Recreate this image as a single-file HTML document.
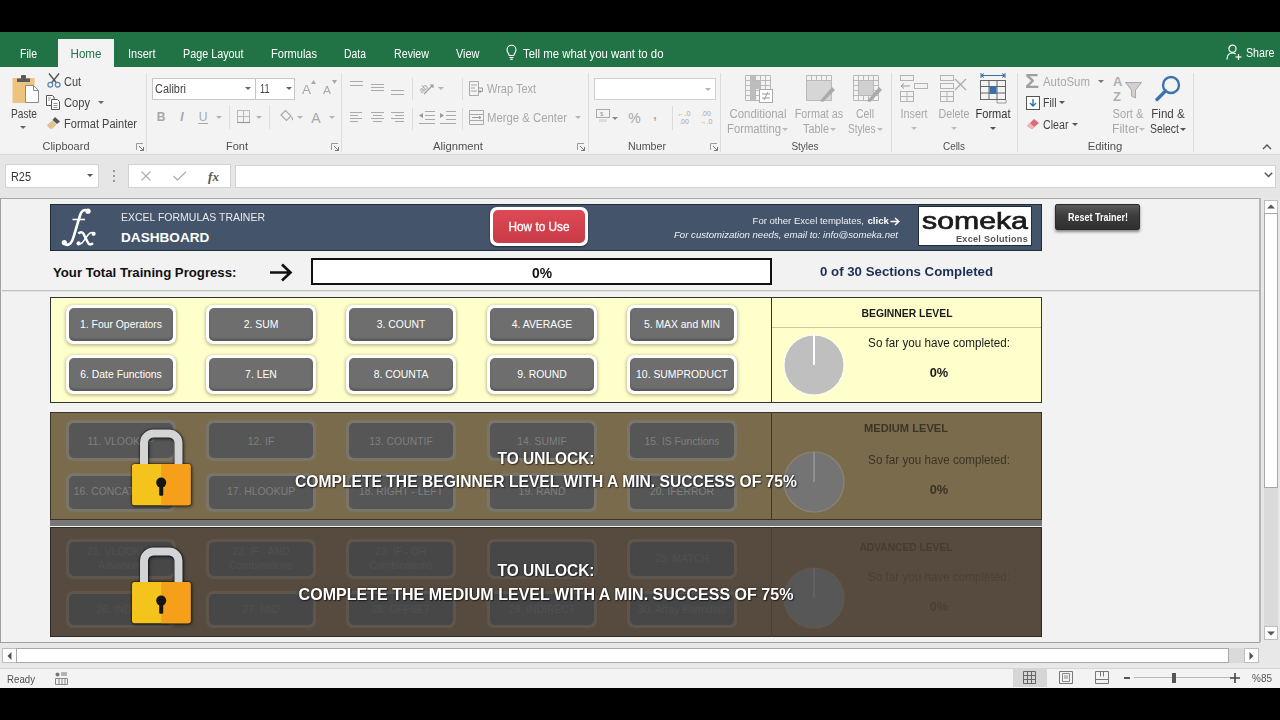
<!DOCTYPE html>
<html><head><meta charset="utf-8">
<style>
*{margin:0;padding:0;box-sizing:border-box}
html,body{width:1280px;height:720px;overflow:hidden;background:#000;position:relative}
.a{position:absolute}
.t{position:absolute;white-space:pre}
svg{position:absolute;overflow:visible}
</style></head><body>
<div class="a" style="left:0px;top:0px;width:1280px;height:32px;background:#000;"></div>
<div class="a" style="left:0px;top:32px;width:1280px;height:35px;background:#217346;"></div>
<div class="a" style="left:58px;top:39px;width:56px;height:28px;background:#f3f3f3;"></div>
<div class="t" style="left:20px;top:47.6px;font:normal normal 12px/1 'Liberation Sans',sans-serif;color:#ffffff;transform:scaleX(0.879);transform-origin:left;">File</div>
<div class="t" style="left:-214px;width:600px;text-align:center;top:47.6px;font:normal normal 12px/1 'Liberation Sans',sans-serif;color:#217346;transform:scaleX(0.968);transform-origin:center;">Home</div>
<div class="t" style="left:128px;top:47.6px;font:normal normal 12px/1 'Liberation Sans',sans-serif;color:#ffffff;transform:scaleX(0.916);transform-origin:left;">Insert</div>
<div class="t" style="left:183px;top:47.6px;font:normal normal 12px/1 'Liberation Sans',sans-serif;color:#ffffff;transform:scaleX(0.898);transform-origin:left;">Page Layout</div>
<div class="t" style="left:271px;top:47.6px;font:normal normal 12px/1 'Liberation Sans',sans-serif;color:#ffffff;transform:scaleX(0.920);transform-origin:left;">Formulas</div>
<div class="t" style="left:344px;top:47.6px;font:normal normal 12px/1 'Liberation Sans',sans-serif;color:#ffffff;transform:scaleX(0.868);transform-origin:left;">Data</div>
<div class="t" style="left:394px;top:47.6px;font:normal normal 12px/1 'Liberation Sans',sans-serif;color:#ffffff;transform:scaleX(0.889);transform-origin:left;">Review</div>
<div class="t" style="left:456px;top:47.6px;font:normal normal 12px/1 'Liberation Sans',sans-serif;color:#ffffff;transform:scaleX(0.911);transform-origin:left;">View</div>
<svg style="left:506px;top:45px" width="11" height="15" viewBox="0 0 11 15"><path d="M3.2 10.5 C3.2 8.5 1 7.5 1 4.8 A4.5 4.5 0 0 1 10 4.8 C10 7.5 7.8 8.5 7.8 10.5 Z" fill="none" stroke="#fff" stroke-width="1.1"/><line x1="3.5" y1="12.5" x2="7.5" y2="12.5" stroke="#fff" stroke-width="1.1"/><line x1="4.2" y1="14.3" x2="6.8" y2="14.3" stroke="#fff" stroke-width="1.1"/></svg>
<div class="t" style="left:523px;top:47.6px;font:normal normal 12px/1 'Liberation Sans',sans-serif;color:#ffffff;transform:scaleX(0.949);transform-origin:left;">Tell me what you want to do</div>
<svg style="left:1226px;top:44px" width="16" height="16" viewBox="0 0 16 16"><circle cx="6.5" cy="4.8" r="3.6" fill="none" stroke="#fff" stroke-width="1.2"/><path d="M1 15.5 C1 11 3.5 9 6.5 9 C8 9 9 9.5 9.8 10" fill="none" stroke="#fff" stroke-width="1.2"/><line x1="12.5" y1="10" x2="12.5" y2="16" stroke="#fff" stroke-width="1.2"/><line x1="9.5" y1="13" x2="15.5" y2="13" stroke="#fff" stroke-width="1.2"/></svg>
<div class="t" style="left:1246px;top:47.1px;font:normal normal 12px/1 'Liberation Sans',sans-serif;color:#ffffff;transform:scaleX(0.890);transform-origin:left;">Share</div>
<div class="a" style="left:0px;top:67px;width:1280px;height:88px;background:#f3f3f3;"></div>
<div class="a" style="left:0px;top:154px;width:1280px;height:1px;background:#d8d8d8;"></div>
<div class="a" style="left:146px;top:73px;width:1px;height:79px;background:#dcdcdc;"></div>
<div class="a" style="left:341px;top:73px;width:1px;height:79px;background:#dcdcdc;"></div>
<div class="a" style="left:588px;top:73px;width:1px;height:79px;background:#dcdcdc;"></div>
<div class="a" style="left:720px;top:73px;width:1px;height:79px;background:#dcdcdc;"></div>
<div class="a" style="left:891px;top:73px;width:1px;height:79px;background:#dcdcdc;"></div>
<div class="a" style="left:1017px;top:73px;width:1px;height:79px;background:#dcdcdc;"></div>
<div class="a" style="left:1193px;top:73px;width:1px;height:79px;background:#dcdcdc;"></div>
<svg style="left:12px;top:75px" width="28" height="30" viewBox="0 0 28 30"><rect x="0.5" y="3" width="22" height="25" fill="#ecc47e"/><path d="M5 3.5H18V7H5Z" fill="#5a5a5a"/><rect x="9" y="0" width="5" height="4" rx="1" fill="#5a5a5a"/><path d="M13.5 10.5H21.5L26.5 15.5V27.5H13.5Z" fill="#fff" stroke="#8a8a8a" stroke-width="1"/><path d="M21.5 10.5V15.5H26.5" fill="none" stroke="#8a8a8a" stroke-width="1"/></svg>
<div class="t" style="left:-276px;width:600px;text-align:center;top:107.6px;font:normal normal 12px/1 'Liberation Sans',sans-serif;color:#444444;transform:scaleX(0.847);transform-origin:center;">Paste</div>
<svg style="left:20px;top:125.5px" width="6" height="3" viewBox="0 0 6 3"><path d="M0 0H6L3 3Z" fill="#666"/></svg>
<svg style="left:47px;top:73px" width="14" height="15" viewBox="0 0 14 15"><path d="M2 0.5L9.5 10M12 0.5L4.5 10" stroke="#555" stroke-width="1.4" fill="none"/><circle cx="3.3" cy="11.8" r="2.4" fill="none" stroke="#5b86b0" stroke-width="1.2"/><circle cx="10.7" cy="11.8" r="2.4" fill="none" stroke="#5b86b0" stroke-width="1.2"/></svg>
<div class="t" style="left:64px;top:75.6px;font:normal normal 12px/1 'Liberation Sans',sans-serif;color:#444444;transform:scaleX(0.910);transform-origin:left;">Cut</div>
<svg style="left:46px;top:95px" width="15" height="15" viewBox="0 0 15 15"><path d="M0.5 0.5H6.5L8 2V10.5H0.5Z" fill="#fff" stroke="#555" stroke-width="1"/><path d="M5.5 4.5H11.5L13.5 6.5V14.5H5.5Z" fill="#fff" stroke="#555" stroke-width="1"/><path d="M7.5 8.5H11.5M7.5 10.5H11.5M7.5 12.5H11.5M2 3H5M2 5H4" stroke="#777" stroke-width="0.8"/></svg>
<div class="t" style="left:64px;top:97.1px;font:normal normal 12px/1 'Liberation Sans',sans-serif;color:#444444;transform:scaleX(0.928);transform-origin:left;">Copy</div>
<svg style="left:98px;top:100.5px" width="6" height="3" viewBox="0 0 6 3"><path d="M0 0H6L3 3Z" fill="#666"/></svg>
<svg style="left:46px;top:116px" width="16" height="14" viewBox="0 0 16 14"><path d="M9 1L14 5.5L11 8L6.5 4Z" fill="#555"/><path d="M6.5 4.5L10.5 8.5L6 13C4 13 1.5 11 1 9Z" fill="#e6c38e"/></svg>
<div class="t" style="left:64px;top:118.1px;font:normal normal 12px/1 'Liberation Sans',sans-serif;color:#444444;transform:scaleX(0.920);transform-origin:left;">Format Painter</div>
<div class="t" style="left:-234px;width:600px;text-align:center;top:140.9px;font:normal normal 11.5px/1 'Liberation Sans',sans-serif;color:#505050;transform:scaleX(0.955);transform-origin:center;">Clipboard</div>
<svg style="left:136px;top:143px" width="8" height="8" viewBox="0 0 8 8"><path d="M0.5 7V0.5H7" fill="none" stroke="#9a9a9a" stroke-width="1"/><path d="M3 3L7.5 7.5M7.5 4V7.5H4" fill="none" stroke="#777" stroke-width="1"/></svg>
<div class="a" style="left:152px;top:78px;width:143px;height:22px;background:#fff;border:1px solid #c6c6c6"></div>
<div class="a" style="left:255px;top:79px;width:1px;height:20px;background:#c6c6c6;"></div>
<div class="t" style="left:155px;top:83.1px;font:normal normal 12px/1 'Liberation Sans',sans-serif;color:#444444;transform:scaleX(0.911);transform-origin:left;">Calibri</div>
<svg style="left:245px;top:86.5px" width="6" height="3" viewBox="0 0 6 3"><path d="M0 0H6L3 3Z" fill="#666"/></svg>
<div class="t" style="left:259.5px;top:83.1px;font:normal normal 12px/1 'Liberation Sans',sans-serif;color:#444444;transform:scaleX(0.762);transform-origin:left;">11</div>
<svg style="left:286px;top:86.5px" width="6" height="3" viewBox="0 0 6 3"><path d="M0 0H6L3 3Z" fill="#666"/></svg>
<div class="t" style="left:302px;top:82.7px;font:normal normal 13px/1 'Liberation Sans',sans-serif;color:#a8a8a8;transform:scaleX(1.038);transform-origin:left;">A</div>
<svg style="left:311px;top:80px" width="5" height="4" viewBox="0 0 5 4"><path d="M0 4L2.5 0L5 4Z" fill="#a8a8a8"/></svg>
<div class="t" style="left:323px;top:84.6px;font:normal normal 11px/1 'Liberation Sans',sans-serif;color:#a8a8a8;transform:scaleX(1.089);transform-origin:left;">A</div>
<svg style="left:332px;top:80px" width="5" height="4" viewBox="0 0 5 4"><path d="M0 0L2.5 4L5 0Z" fill="#a8a8a8"/></svg>
<div class="t" style="left:-139px;width:600px;text-align:center;top:111.1px;font:normal bold 12px/1 'Liberation Sans',sans-serif;color:#a8a8a8;">B</div>
<div class="t" style="left:-118px;width:600px;text-align:center;top:111.1px;font:italic bold 12px/1 'Liberation Sans',sans-serif;color:#a8a8a8;">I</div>
<div class="t" style="left:-97px;width:600px;text-align:center;top:110.6px;font:normal normal 12px/1 'Liberation Sans',sans-serif;color:#a8a8a8;">U</div>
<div class="a" style="left:198px;top:123px;width:10px;height:1px;background:#a8a8a8;"></div>
<svg style="left:216px;top:115.5px" width="6" height="3" viewBox="0 0 6 3"><path d="M0 0H6L3 3Z" fill="#b5b5b5"/></svg>
<div class="a" style="left:229px;top:105px;width:1px;height:24px;background:#dcdcdc;"></div>
<svg style="left:237px;top:110px" width="13" height="13" viewBox="0 0 13 13"><path d="M0.5 0.5H12.5V12.5H0.5ZM6.5 0.5V12.5M0.5 6.5H12.5" fill="none" stroke="#b8b8b8" stroke-width="1"/><path d="M0 12.5H13" stroke="#999" stroke-width="1.2"/></svg>
<svg style="left:256px;top:115.5px" width="6" height="3" viewBox="0 0 6 3"><path d="M0 0H6L3 3Z" fill="#b5b5b5"/></svg>
<div class="a" style="left:269px;top:105px;width:1px;height:24px;background:#dcdcdc;"></div>
<svg style="left:278px;top:109px" width="16" height="14" viewBox="0 0 16 14"><path d="M3 6L7.5 1.5L13 7L8.5 11.5Z" fill="none" stroke="#a8a8a8" stroke-width="1.2"/><path d="M13.5 8C14.5 9.5 15 10.5 14 11" stroke="#a8a8a8" stroke-width="1.2" fill="none"/></svg>
<svg style="left:297px;top:115.5px" width="6" height="3" viewBox="0 0 6 3"><path d="M0 0H6L3 3Z" fill="#b5b5b5"/></svg>
<div class="t" style="left:16px;width:600px;text-align:center;top:110.7px;font:normal normal 14px/1 'Liberation Sans',sans-serif;color:#a8a8a8;">A</div>
<svg style="left:329px;top:115.5px" width="6" height="3" viewBox="0 0 6 3"><path d="M0 0H6L3 3Z" fill="#b5b5b5"/></svg>
<div class="t" style="left:-63px;width:600px;text-align:center;top:140.9px;font:normal normal 11.5px/1 'Liberation Sans',sans-serif;color:#505050;transform:scaleX(0.956);transform-origin:center;">Font</div>
<svg style="left:331px;top:143px" width="8" height="8" viewBox="0 0 8 8"><path d="M0.5 7V0.5H7" fill="none" stroke="#9a9a9a" stroke-width="1"/><path d="M3 3L7.5 7.5M7.5 4V7.5H4" fill="none" stroke="#777" stroke-width="1"/></svg>
<svg style="left:350px;top:81px" width="16" height="9"><rect x="0" y="0" width="13" height="1" fill="#aaa"/><rect x="0" y="4" width="13" height="1" fill="#aaa"/></svg>
<svg style="left:371px;top:84px" width="16" height="10"><rect x="0" y="0" width="13" height="1" fill="#aaa"/><rect x="0" y="3" width="13" height="1" fill="#aaa"/><rect x="0" y="6" width="13" height="1" fill="#aaa"/></svg>
<svg style="left:391px;top:90px" width="16" height="9"><rect x="0" y="0" width="13" height="1" fill="#aaa"/><rect x="0" y="4" width="13" height="1" fill="#aaa"/></svg>
<svg style="left:350px;top:112px" width="16" height="13"><rect x="0" y="0" width="12" height="1" fill="#aaa"/><rect x="0" y="3" width="8" height="1" fill="#aaa"/><rect x="0" y="6" width="12" height="1" fill="#aaa"/><rect x="0" y="9" width="8" height="1" fill="#aaa"/></svg>
<svg style="left:371px;top:112px" width="16" height="13"><rect x="0" y="0" width="13" height="1" fill="#aaa"/><rect x="2" y="3" width="9" height="1" fill="#aaa"/><rect x="0" y="6" width="13" height="1" fill="#aaa"/><rect x="2" y="9" width="9" height="1" fill="#aaa"/></svg>
<svg style="left:391px;top:112px" width="16" height="13"><rect x="0" y="0" width="13" height="1" fill="#aaa"/><rect x="4" y="3" width="9" height="1" fill="#aaa"/><rect x="0" y="6" width="13" height="1" fill="#aaa"/><rect x="4" y="9" width="9" height="1" fill="#aaa"/></svg>
<div class="a" style="left:412px;top:78px;width:1px;height:22px;background:#dcdcdc;"></div>
<div class="a" style="left:412px;top:108px;width:1px;height:22px;background:#dcdcdc;"></div>
<svg style="left:419px;top:81px" width="16" height="15" viewBox="0 0 16 15"><text x="0" y="9" font-family="Liberation Sans" font-size="8" fill="#999" transform="rotate(-40 6 7)">ab</text><path d="M5 13L14 4M11 4H14V7" stroke="#999" stroke-width="1.1" fill="none"/></svg>
<svg style="left:438px;top:86.5px" width="6" height="3" viewBox="0 0 6 3"><path d="M0 0H6L3 3Z" fill="#b5b5b5"/></svg>
<svg style="left:419px;top:111px" width="16" height="13"><rect x="6" y="0" width="10" height="1" fill="#aaa"/><rect x="6" y="4" width="10" height="1" fill="#aaa"/><rect x="6" y="8" width="10" height="1" fill="#aaa"/><rect x="0" y="12" width="16" height="1" fill="#aaa"/><path d="M0 4.5L4 2V7Z" fill="#999"/></svg>
<svg style="left:440px;top:111px" width="16" height="13"><rect x="6" y="0" width="10" height="1" fill="#aaa"/><rect x="6" y="4" width="10" height="1" fill="#aaa"/><rect x="6" y="8" width="10" height="1" fill="#aaa"/><rect x="0" y="12" width="16" height="1" fill="#aaa"/><path d="M4 4.5L0 2V7Z" fill="#999"/></svg>
<div class="a" style="left:462px;top:78px;width:1px;height:22px;background:#dcdcdc;"></div>
<div class="a" style="left:462px;top:108px;width:1px;height:22px;background:#dcdcdc;"></div>
<svg style="left:469px;top:81px" width="15" height="15" viewBox="0 0 15 15"><path d="M0.5 0.5H9.5V14.5H0.5Z" fill="none" stroke="#aaa"/><path d="M2 4H8M2 7H6M2 10H8" stroke="#aaa"/><path d="M9 7H13.5V10.5H10M11.5 9L10 10.5L11.5 12" stroke="#999" fill="none"/></svg>
<div class="t" style="left:487px;top:83.1px;font:normal normal 12px/1 'Liberation Sans',sans-serif;color:#a8a8a8;transform:scaleX(0.915);transform-origin:left;">Wrap Text</div>
<svg style="left:469px;top:110px" width="15" height="15" viewBox="0 0 15 15"><path d="M0.5 0.5H14.5V14.5H0.5ZM0.5 4.5H14.5M0.5 10.5H14.5" fill="none" stroke="#aaa"/><path d="M3 7.5H12M10 6L12 7.5L10 9" stroke="#999" fill="none"/></svg>
<div class="t" style="left:487px;top:111.6px;font:normal normal 12px/1 'Liberation Sans',sans-serif;color:#a8a8a8;transform:scaleX(0.944);transform-origin:left;">Merge &amp; Center</div>
<svg style="left:575px;top:115.5px" width="6" height="3" viewBox="0 0 6 3"><path d="M0 0H6L3 3Z" fill="#b5b5b5"/></svg>
<div class="t" style="left:158px;width:600px;text-align:center;top:140.9px;font:normal normal 11.5px/1 'Liberation Sans',sans-serif;color:#505050;transform:scaleX(0.978);transform-origin:center;">Alignment</div>
<svg style="left:577px;top:143px" width="8" height="8" viewBox="0 0 8 8"><path d="M0.5 7V0.5H7" fill="none" stroke="#9a9a9a" stroke-width="1"/><path d="M3 3L7.5 7.5M7.5 4V7.5H4" fill="none" stroke="#777" stroke-width="1"/></svg>
<div class="a" style="left:594px;top:78px;width:122px;height:22px;background:#fff;border:1px solid #d0d0d0"></div>
<svg style="left:705px;top:87.5px" width="6" height="3" viewBox="0 0 6 3"><path d="M0 0H6L3 3Z" fill="#b5b5b5"/></svg>
<svg style="left:596px;top:109px" width="15" height="15"><rect x="0.5" y="0.5" width="13" height="8" fill="none" stroke="#aaa"/><rect x="3" y="10" width="8" height="3" fill="#ddd"/><text x="4" y="7" font-size="6" font-family="Liberation Sans" fill="#999">$</text></svg>
<svg style="left:612px;top:116.5px" width="6" height="3" viewBox="0 0 6 3"><path d="M0 0H6L3 3Z" fill="#888"/></svg>
<div class="t" style="left:334.5px;width:600px;text-align:center;top:111.2px;font:normal normal 14px/1 'Liberation Sans',sans-serif;color:#a8a8a8;">%</div>
<div class="t" style="left:355px;width:600px;text-align:center;top:109.1px;font:normal bold 12px/1 'Liberation Sans',sans-serif;color:#a8a8a8;">,</div>
<div class="a" style="left:672px;top:106px;width:1px;height:24px;background:#dcdcdc;"></div>
<div class="t" style="left:384px;width:600px;text-align:center;top:109.6px;font:normal normal 7px/1 'Liberation Sans',sans-serif;color:#a8a8a8;">←.0</div>
<div class="t" style="left:384px;width:600px;text-align:center;top:117.6px;font:normal normal 7px/1 'Liberation Sans',sans-serif;color:#a8a8a8;">.00</div>
<div class="t" style="left:406px;width:600px;text-align:center;top:109.6px;font:normal normal 7px/1 'Liberation Sans',sans-serif;color:#a8a8a8;">.00</div>
<div class="t" style="left:406px;width:600px;text-align:center;top:117.6px;font:normal normal 7px/1 'Liberation Sans',sans-serif;color:#a8a8a8;">→.0</div>
<div class="t" style="left:347px;width:600px;text-align:center;top:140.9px;font:normal normal 11.5px/1 'Liberation Sans',sans-serif;color:#505050;transform:scaleX(0.929);transform-origin:center;">Number</div>
<svg style="left:710px;top:143px" width="8" height="8" viewBox="0 0 8 8"><path d="M0.5 7V0.5H7" fill="none" stroke="#9a9a9a" stroke-width="1"/><path d="M3 3L7.5 7.5M7.5 4V7.5H4" fill="none" stroke="#777" stroke-width="1"/></svg>
<svg style="left:745px;top:75px" width="30" height="30" viewBox="0 0 30 30"><g fill="none" stroke="#b9b9b9" stroke-width="1"><line x1="0.5" y1="0.5" x2="0.5" y2="25.5"/><line x1="5.5" y1="0.5" x2="5.5" y2="25.5"/><line x1="10.5" y1="0.5" x2="10.5" y2="25.5"/><line x1="15.5" y1="0.5" x2="15.5" y2="25.5"/><line x1="20.5" y1="0.5" x2="20.5" y2="25.5"/><line x1="25.5" y1="0.5" x2="25.5" y2="25.5"/><line x1="0.5" y1="0.5" x2="25.5" y2="0.5"/><line x1="0.5" y1="5.5" x2="25.5" y2="5.5"/><line x1="0.5" y1="10.5" x2="25.5" y2="10.5"/><line x1="0.5" y1="15.5" x2="25.5" y2="15.5"/><line x1="0.5" y1="20.5" x2="25.5" y2="20.5"/><line x1="0.5" y1="25.5" x2="25.5" y2="25.5"/></g><rect x="6" y="1" width="4" height="24" fill="#bdbdbd"/><rect x="10" y="6" width="5" height="8" fill="#bdbdbd"/><rect x="14.5" y="14.5" width="13" height="13" fill="#fff" stroke="#aaa"/><path d="M17 19H25M17 23H25M23 17L19 25" stroke="#999"/></svg>
<div class="t" style="left:458px;width:600px;text-align:center;top:107.6px;font:normal normal 12px/1 'Liberation Sans',sans-serif;color:#a8a8a8;transform:scaleX(0.949);transform-origin:center;">Conditional</div>
<div class="t" style="left:727px;top:123.1px;font:normal normal 12px/1 'Liberation Sans',sans-serif;color:#a8a8a8;transform:scaleX(0.941);transform-origin:left;">Formatting</div>
<svg style="left:782px;top:127.5px" width="6" height="3" viewBox="0 0 6 3"><path d="M0 0H6L3 3Z" fill="#bbb"/></svg>
<svg style="left:806px;top:75px" width="30" height="30" viewBox="0 0 30 30"><g fill="none" stroke="#b9b9b9" stroke-width="1"><line x1="0.5" y1="0.5" x2="0.5" y2="25.5"/><line x1="5.5" y1="0.5" x2="5.5" y2="25.5"/><line x1="10.5" y1="0.5" x2="10.5" y2="25.5"/><line x1="15.5" y1="0.5" x2="15.5" y2="25.5"/><line x1="20.5" y1="0.5" x2="20.5" y2="25.5"/><line x1="25.5" y1="0.5" x2="25.5" y2="25.5"/><line x1="0.5" y1="0.5" x2="25.5" y2="0.5"/><line x1="0.5" y1="5.5" x2="25.5" y2="5.5"/><line x1="0.5" y1="10.5" x2="25.5" y2="10.5"/><line x1="0.5" y1="15.5" x2="25.5" y2="15.5"/><line x1="0.5" y1="20.5" x2="25.5" y2="20.5"/><line x1="0.5" y1="25.5" x2="25.5" y2="25.5"/></g><rect x="1" y="6" width="24" height="19" fill="#d6d6d6"/><path d="M14 26L26 12L29 15L17 27Z" fill="#aaa"/></svg>
<div class="t" style="left:518.5px;width:600px;text-align:center;top:107.6px;font:normal normal 12px/1 'Liberation Sans',sans-serif;color:#a8a8a8;transform:scaleX(0.898);transform-origin:center;">Format as</div>
<div class="t" style="left:803px;top:123.1px;font:normal normal 12px/1 'Liberation Sans',sans-serif;color:#a8a8a8;transform:scaleX(0.906);transform-origin:left;">Table</div>
<svg style="left:830px;top:127.5px" width="6" height="3" viewBox="0 0 6 3"><path d="M0 0H6L3 3Z" fill="#bbb"/></svg>
<svg style="left:853px;top:75px" width="30" height="30" viewBox="0 0 30 30"><g fill="none" stroke="#b9b9b9" stroke-width="1"><line x1="0.5" y1="0.5" x2="0.5" y2="25.5"/><line x1="5.5" y1="0.5" x2="5.5" y2="25.5"/><line x1="10.5" y1="0.5" x2="10.5" y2="25.5"/><line x1="15.5" y1="0.5" x2="15.5" y2="25.5"/><line x1="20.5" y1="0.5" x2="20.5" y2="25.5"/><line x1="25.5" y1="0.5" x2="25.5" y2="25.5"/><line x1="0.5" y1="0.5" x2="25.5" y2="0.5"/><line x1="0.5" y1="5.5" x2="25.5" y2="5.5"/><line x1="0.5" y1="10.5" x2="25.5" y2="10.5"/><line x1="0.5" y1="15.5" x2="25.5" y2="15.5"/><line x1="0.5" y1="20.5" x2="25.5" y2="20.5"/><line x1="0.5" y1="25.5" x2="25.5" y2="25.5"/></g><rect x="6" y="6" width="14" height="14" fill="#d0d0d0"/><path d="M14 26L26 12L29 15L17 27Z" fill="#aaa"/></svg>
<div class="t" style="left:565px;width:600px;text-align:center;top:107.6px;font:normal normal 12px/1 'Liberation Sans',sans-serif;color:#a8a8a8;transform:scaleX(0.871);transform-origin:center;">Cell</div>
<div class="t" style="left:848px;top:123.1px;font:normal normal 12px/1 'Liberation Sans',sans-serif;color:#a8a8a8;transform:scaleX(0.841);transform-origin:left;">Styles</div>
<svg style="left:877px;top:127.5px" width="6" height="3" viewBox="0 0 6 3"><path d="M0 0H6L3 3Z" fill="#bbb"/></svg>
<div class="t" style="left:504.5px;width:600px;text-align:center;top:140.9px;font:normal normal 11.5px/1 'Liberation Sans',sans-serif;color:#505050;transform:scaleX(0.862);transform-origin:center;">Styles</div>
<svg style="left:900px;top:75px" width="28" height="28" viewBox="0 0 28 28"><g fill="none" stroke="#b3b3b3"><rect x="0.5" y="0.5" width="13" height="5"/><rect x="0.5" y="16.5" width="13" height="10"/><line x1="7" y1="16.5" x2="7" y2="26.5"/><line x1="0.5" y1="21.5" x2="13.5" y2="21.5"/><rect x="14.5" y="8.5" width="13" height="5"/></g><path d="M1 11H10M4 8.5L1 11L4 13.5" stroke="#999" fill="none"/></svg>
<div class="t" style="left:614px;width:600px;text-align:center;top:107.6px;font:normal normal 12px/1 'Liberation Sans',sans-serif;color:#a8a8a8;transform:scaleX(0.900);transform-origin:center;">Insert</div>
<svg style="left:911px;top:127.0px" width="6" height="3" viewBox="0 0 6 3"><path d="M0 0H6L3 3Z" fill="#bbb"/></svg>
<svg style="left:940px;top:75px" width="28" height="28" viewBox="0 0 28 28"><g fill="none" stroke="#b3b3b3"><rect x="0.5" y="0.5" width="13" height="5"/><rect x="0.5" y="16.5" width="13" height="10"/><line x1="7" y1="16.5" x2="7" y2="26.5"/><line x1="0.5" y1="21.5" x2="13.5" y2="21.5"/><rect x="0.5" y="8.5" width="13" height="5"/></g><path d="M15 4L26 15M26 4L15 15" stroke="#aaa" stroke-width="1.3"/></svg>
<div class="t" style="left:653.5px;width:600px;text-align:center;top:107.6px;font:normal normal 12px/1 'Liberation Sans',sans-serif;color:#a8a8a8;transform:scaleX(0.894);transform-origin:center;">Delete</div>
<svg style="left:951px;top:127.0px" width="6" height="3" viewBox="0 0 6 3"><path d="M0 0H6L3 3Z" fill="#bbb"/></svg>
<svg style="left:979px;top:73px" width="30" height="32" viewBox="0 0 30 32"><path d="M2 2.5H26M2 0V5M26 0V5M5 0.5L2 2.5L5 4.5M23 0.5L26 2.5L23 4.5" stroke="#3a6ea5" stroke-width="1" fill="none"/><g fill="none" stroke="#666"><rect x="1.5" y="7.5" width="25" height="19"/><line x1="10" y1="7.5" x2="10" y2="26.5"/><line x1="18" y1="7.5" x2="18" y2="26.5"/><line x1="1.5" y1="13.5" x2="26.5" y2="13.5"/><line x1="1.5" y1="20" x2="26.5" y2="20"/></g><rect x="10.5" y="13" width="7" height="8" fill="#3a6ea5"/><path d="M18 27V30H27V27" fill="none" stroke="#999"/></svg>
<div class="t" style="left:693px;width:600px;text-align:center;top:107.6px;font:normal normal 12px/1 'Liberation Sans',sans-serif;color:#333;transform:scaleX(0.921);transform-origin:center;">Format</div>
<svg style="left:990px;top:127.0px" width="6" height="3" viewBox="0 0 6 3"><path d="M0 0H6L3 3Z" fill="#555"/></svg>
<div class="t" style="left:653.5px;width:600px;text-align:center;top:140.9px;font:normal normal 11.5px/1 'Liberation Sans',sans-serif;color:#505050;transform:scaleX(0.861);transform-origin:center;">Cells</div>
<div class="t" style="left:731.5px;width:600px;text-align:center;top:71.2px;font:normal bold 20px/1 'Liberation Sans',sans-serif;color:#a0a0a0;transform:scaleX(1.165);transform-origin:center;">Σ</div>
<div class="t" style="left:1043px;top:75.6px;font:normal normal 12px/1 'Liberation Sans',sans-serif;color:#a8a8a8;transform:scaleX(0.952);transform-origin:left;">AutoSum</div>
<svg style="left:1098px;top:79.5px" width="6" height="3" viewBox="0 0 6 3"><path d="M0 0H6L3 3Z" fill="#777"/></svg>
<svg style="left:1026px;top:96px" width="14" height="14" viewBox="0 0 14 14"><rect x="0.5" y="0.5" width="13" height="13" fill="#fff" stroke="#555"/><path d="M7 3V10M4 7L7 10L10 7" stroke="#2f6db5" stroke-width="1.4" fill="none"/></svg>
<div class="t" style="left:1043px;top:97.1px;font:normal normal 12px/1 'Liberation Sans',sans-serif;color:#444444;transform:scaleX(0.881);transform-origin:left;">Fill</div>
<svg style="left:1059px;top:100.5px" width="6" height="3" viewBox="0 0 6 3"><path d="M0 0H6L3 3Z" fill="#555"/></svg>
<svg style="left:1026px;top:117px" width="15" height="13" viewBox="0 0 15 13"><path d="M1 9L8 2L13 6L6 12Z" fill="#e06a74"/><path d="M1 9L4 6L8.5 10L6 12Z" fill="#f2b5bb"/></svg>
<div class="t" style="left:1043px;top:118.6px;font:normal normal 12px/1 'Liberation Sans',sans-serif;color:#444444;transform:scaleX(0.889);transform-origin:left;">Clear</div>
<svg style="left:1072px;top:122.5px" width="6" height="3" viewBox="0 0 6 3"><path d="M0 0H6L3 3Z" fill="#555"/></svg>
<svg style="left:1113px;top:74px" width="30" height="30" viewBox="0 0 30 30"><text x="0" y="12" font-family="Liberation Sans" font-weight="bold" font-size="13" fill="#b0b0b0">A</text><text x="0" y="27" font-family="Liberation Sans" font-weight="bold" font-size="13" fill="#b0b0b0">Z</text><path d="M12.5 8.5H28.5L22.5 16V24L18.5 22V16Z" fill="#d0d0d0" stroke="#aaa"/></svg>
<div class="t" style="left:827.5px;width:600px;text-align:center;top:107.6px;font:normal normal 12px/1 'Liberation Sans',sans-serif;color:#a8a8a8;transform:scaleX(0.929);transform-origin:center;">Sort &amp;</div>
<div class="t" style="left:1112px;top:123.1px;font:normal normal 12px/1 'Liberation Sans',sans-serif;color:#a8a8a8;transform:scaleX(1.012);transform-origin:left;">Filter</div>
<svg style="left:1139px;top:127.5px" width="6" height="3" viewBox="0 0 6 3"><path d="M0 0H6L3 3Z" fill="#bbb"/></svg>
<svg style="left:1153px;top:74px" width="30" height="30" viewBox="0 0 30 30"><circle cx="18" cy="11" r="8" fill="none" stroke="#3b73ae" stroke-width="2.4"/><path d="M12.5 17L4 25.5" stroke="#3b73ae" stroke-width="3.4" stroke-linecap="round"/></svg>
<div class="t" style="left:867.5px;width:600px;text-align:center;top:107.6px;font:normal normal 12px/1 'Liberation Sans',sans-serif;color:#444444;transform:scaleX(0.966);transform-origin:center;">Find &amp;</div>
<div class="t" style="left:1149.5px;top:123.1px;font:normal normal 12px/1 'Liberation Sans',sans-serif;color:#444444;transform:scaleX(0.869);transform-origin:left;">Select</div>
<svg style="left:1180px;top:127.5px" width="6" height="3" viewBox="0 0 6 3"><path d="M0 0H6L3 3Z" fill="#555"/></svg>
<div class="t" style="left:805px;width:600px;text-align:center;top:140.9px;font:normal normal 11.5px/1 'Liberation Sans',sans-serif;color:#505050;transform:scaleX(0.981);transform-origin:center;">Editing</div>
<svg style="left:1262px;top:144px" width="10" height="6" viewBox="0 0 10 6"><path d="M1 5L5 1L9 5" stroke="#555" stroke-width="1.4" fill="none"/></svg>
<div class="a" style="left:0px;top:155px;width:1280px;height:43px;background:#e6e6e6;"></div>
<div class="a" style="left:5px;top:164px;width:94px;height:24px;background:#fff;border:1px solid #d2d2d2"></div>
<div class="t" style="left:11px;top:170.6px;font:normal normal 12px/1 'Liberation Sans',sans-serif;color:#333;transform:scaleX(0.908);transform-origin:left;">R25</div>
<svg style="left:87px;top:173.5px" width="6" height="3" viewBox="0 0 6 3"><path d="M0 0H6L3 3Z" fill="#555"/></svg>
<div class="a" style="left:113px;top:170px;width:2px;height:2px;background:#9a9a9a;"></div>
<div class="a" style="left:113px;top:175px;width:2px;height:2px;background:#9a9a9a;"></div>
<div class="a" style="left:113px;top:180px;width:2px;height:2px;background:#9a9a9a;"></div>
<div class="a" style="left:128px;top:164px;width:103px;height:24px;background:#fff;border:1px solid #d2d2d2"></div>
<svg style="left:141px;top:171px" width="10" height="10"><path d="M0.5 0.5L9.5 9.5M9.5 0.5L0.5 9.5" stroke="#b0b0b0" stroke-width="1.2"/></svg>
<svg style="left:173px;top:171px" width="14" height="10"><path d="M0.5 5L4.5 9L13 0.8" stroke="#b0b0b0" stroke-width="1.3" fill="none"/></svg>
<div class="t" style="left:-86.5px;width:600px;text-align:center;top:169.7px;font:italic bold 13px/1 'Liberation Serif',serif;color:#555;">fx</div>
<div class="a" style="left:235px;top:165px;width:1041px;height:23px;background:#fff;border:1px solid #d2d2d2"></div>
<svg style="left:1264px;top:172px" width="9" height="6"><path d="M0.8 0.8L4.5 4.5L8.2 0.8" stroke="#555" stroke-width="1.5" fill="none"/></svg>
<div class="a" style="left:0px;top:198px;width:1259px;height:444px;background:#f2f2f2;"></div>
<div class="a" style="left:0px;top:198px;width:1259px;height:1px;background:#a8a8a8;"></div>
<div class="a" style="left:0px;top:198px;width:1px;height:444px;background:#a0a0a0;"></div>
<div class="a" style="left:50px;top:204px;width:992px;height:47px;background:#44546a;border:1px solid #222b38"></div>
<svg style="left:50px;top:202px" width="60" height="50" viewBox="0 0 60 50"><path d="M14.3 41.5 C17.5 44.5 21.5 42.5 23.5 35 L30 13.5 C31.3 9 33.8 7 37.5 8.6" fill="none" stroke="#fff" stroke-width="2.6" stroke-linecap="round"/><circle cx="14.3" cy="40.6" r="2.6" fill="#fff"/><circle cx="38" cy="9.2" r="2.6" fill="#fff"/><path d="M22.5 17.5H35" stroke="#fff" stroke-width="1.6"/><path d="M28.3 31.5C31 29.3 33.2 30 34.6 34L37.6 40C38.8 42.6 40.3 43.2 43 41.2" fill="none" stroke="#fff" stroke-width="2.5"/><path d="M43.5 31C41.5 29.7 39.8 30.5 37.8 33.2L33.2 39.6C31.6 42 30.2 42.8 28.3 41.6" fill="none" stroke="#fff" stroke-width="1.5"/><circle cx="43.6" cy="31.8" r="2.1" fill="#fff"/><circle cx="28.6" cy="41.4" r="2.1" fill="#fff"/></svg>
<div class="t" style="left:121px;top:212.0px;font:normal normal 11.2px/1 'Liberation Sans',sans-serif;color:#e9ebee;transform:scaleX(0.938);transform-origin:left;">EXCEL FORMULAS TRAINER</div>
<div class="t" style="left:121px;top:231.0px;font:normal bold 13.6px/1 'Liberation Sans',sans-serif;color:#ffffff;">DASHBOARD</div>
<div class="a" style="left:490px;top:207px;width:98px;height:39px;background:#fff;border-radius:7px;box-shadow:0 1px 2px rgba(0,0,0,.5)"></div>
<div class="a" style="left:493px;top:210px;width:92px;height:33px;background:linear-gradient(#dc4a55,#c93b46);border-radius:5px"></div>
<div class="t" style="left:239px;width:600px;text-align:center;top:220.6px;font:normal normal 12.3px/1 'Liberation Sans',sans-serif;color:#fff;transform:scaleX(0.960);transform-origin:center;-webkit-text-stroke:0.3px #fff">How to Use</div>
<div class="t" style="left:264px;width:600px;text-align:right;top:217.1px;font:normal normal 9.1px/1 'Liberation Sans',sans-serif;color:#eef0f3;transform:scaleX(1.050);transform-origin:right;">For other Excel templates,</div>
<div class="t" style="left:288.6px;width:600px;text-align:right;top:217.1px;font:normal bold 9.1px/1 'Liberation Sans',sans-serif;color:#fff;transform:scaleX(1.067);transform-origin:right;">click</div>
<svg style="left:890px;top:217px" width="10" height="9" viewBox="0 0 10 9"><path d="M0.5 4.5H8.5M5 1L8.8 4.5L5 8" fill="none" stroke="#fff" stroke-width="1.5"/></svg>
<div class="t" style="left:298px;width:600px;text-align:right;top:230.6px;font:italic normal 9.1px/1 'Liberation Sans',sans-serif;color:#eef0f3;transform:scaleX(1.057);transform-origin:right;">For customization needs, email to: info@someka.net</div>
<div class="a" style="left:918px;top:206px;width:114px;height:40px;background:#fff;border:1px solid #222b38"></div>
<div class="t" style="left:922px;top:208.5px;font:normal normal 24.5px/1 'Liberation Sans',sans-serif;color:#1a1a1a;transform:scaleX(1.235);transform-origin:left;-webkit-text-stroke:0.7px #1a1a1a">someka</div>
<div class="t" style="left:428px;width:600px;text-align:right;top:233.8px;font:normal bold 9.6px/1 'Liberation Sans',sans-serif;color:#555;transform:scaleX(0.948);transform-origin:right;letter-spacing:0.3px">Excel Solutions</div>
<div class="a" style="left:1055px;top:204px;width:85px;height:26px;background:linear-gradient(#5a5a5a,#3c3c3c 45%,#2f2f2f);border-radius:2px;border:1px solid #2a2a2a;box-shadow:0 2px 3px rgba(0,0,0,.45)"></div>
<div class="t" style="left:797.5px;width:600px;text-align:center;top:213.3px;font:normal bold 10px/1 'Liberation Sans',sans-serif;color:#fff;transform:scaleX(0.900);transform-origin:center;">Reset Trainer!</div>
<div class="t" style="left:53px;top:266.1px;font:normal bold 13.2px/1 'Liberation Sans',sans-serif;color:#111;">Your Total Training Progress:</div>
<svg style="left:269px;top:263px" width="24" height="19" viewBox="0 0 24 19"><path d="M1 9.5H21M13 1.5L21.5 9.5L13 17.5" fill="none" stroke="#111" stroke-width="2.6"/></svg>
<div class="a" style="left:311px;top:258px;width:461px;height:27px;background:#fff;border:2px solid #111"></div>
<div class="t" style="left:241.5px;width:600px;text-align:center;top:265.8px;font:normal bold 14px/1 'Liberation Sans',sans-serif;color:#111;transform:scaleX(0.988);transform-origin:center;">0%</div>
<div class="t" style="left:819.5px;top:265.4px;font:normal bold 13.6px/1 'Liberation Sans',sans-serif;color:#1b2f56;transform:scaleX(0.975);transform-origin:left;">0 of 30 Sections Completed</div>
<div class="a" style="left:2px;top:290px;width:1257px;height:1px;background:#c2c2c2;"></div>
<div class="a" style="left:2px;top:291px;width:1257px;height:1px;background:#e2e2e2;"></div>
<div class="a" style="left:50px;top:297px;width:992px;height:106px;background:#ffffcc;border:1px solid #333"></div>
<div class="a" style="left:771px;top:297px;width:1px;height:106px;background:#333;"></div>
<div class="a" style="left:772px;top:327px;width:269px;height:1px;background:#c9c9a6;"></div>
<div class="t" style="left:607px;width:600px;text-align:center;top:307.5px;font:normal bold 11px/1 'Liberation Sans',sans-serif;color:#1a1a1a;transform:scaleX(0.942);transform-origin:center;">BEGINNER LEVEL</div>
<div class="a" style="left:66px;top:305px;width:110px;height:39px;background:#ffffff;border-radius:7px;box-shadow:0 1px 3px 1px rgba(130,120,70,.45);"></div>
<div class="a" style="left:69px;top:307.5px;width:104px;height:33.5px;background:#6e6e6e;border-radius:5px;box-shadow:inset 0 -2px 2px rgba(0,0,0,.22);"></div>
<div class="t" style="left:-179.0px;width:600px;text-align:center;top:319.9px;font:normal normal 10.4px/1 'Liberation Sans',sans-serif;color:#fff;">1. Four Operators</div>
<div class="a" style="left:206px;top:305px;width:110px;height:39px;background:#ffffff;border-radius:7px;box-shadow:0 1px 3px 1px rgba(130,120,70,.45);"></div>
<div class="a" style="left:209px;top:307.5px;width:104px;height:33.5px;background:#6e6e6e;border-radius:5px;box-shadow:inset 0 -2px 2px rgba(0,0,0,.22);"></div>
<div class="t" style="left:-39.0px;width:600px;text-align:center;top:319.9px;font:normal normal 10.4px/1 'Liberation Sans',sans-serif;color:#fff;">2. SUM</div>
<div class="a" style="left:346px;top:305px;width:110px;height:39px;background:#ffffff;border-radius:7px;box-shadow:0 1px 3px 1px rgba(130,120,70,.45);"></div>
<div class="a" style="left:349px;top:307.5px;width:104px;height:33.5px;background:#6e6e6e;border-radius:5px;box-shadow:inset 0 -2px 2px rgba(0,0,0,.22);"></div>
<div class="t" style="left:101.0px;width:600px;text-align:center;top:319.9px;font:normal normal 10.4px/1 'Liberation Sans',sans-serif;color:#fff;">3. COUNT</div>
<div class="a" style="left:487px;top:305px;width:110px;height:39px;background:#ffffff;border-radius:7px;box-shadow:0 1px 3px 1px rgba(130,120,70,.45);"></div>
<div class="a" style="left:490px;top:307.5px;width:104px;height:33.5px;background:#6e6e6e;border-radius:5px;box-shadow:inset 0 -2px 2px rgba(0,0,0,.22);"></div>
<div class="t" style="left:242.0px;width:600px;text-align:center;top:319.9px;font:normal normal 10.4px/1 'Liberation Sans',sans-serif;color:#fff;">4. AVERAGE</div>
<div class="a" style="left:627px;top:305px;width:110px;height:39px;background:#ffffff;border-radius:7px;box-shadow:0 1px 3px 1px rgba(130,120,70,.45);"></div>
<div class="a" style="left:630px;top:307.5px;width:104px;height:33.5px;background:#6e6e6e;border-radius:5px;box-shadow:inset 0 -2px 2px rgba(0,0,0,.22);"></div>
<div class="t" style="left:382.0px;width:600px;text-align:center;top:319.9px;font:normal normal 10.4px/1 'Liberation Sans',sans-serif;color:#fff;">5. MAX and MIN</div>
<div class="a" style="left:66px;top:355px;width:110px;height:39px;background:#ffffff;border-radius:7px;box-shadow:0 1px 3px 1px rgba(130,120,70,.45);"></div>
<div class="a" style="left:69px;top:357.5px;width:104px;height:33.5px;background:#6e6e6e;border-radius:5px;box-shadow:inset 0 -2px 2px rgba(0,0,0,.22);"></div>
<div class="t" style="left:-179.0px;width:600px;text-align:center;top:369.9px;font:normal normal 10.4px/1 'Liberation Sans',sans-serif;color:#fff;">6. Date Functions</div>
<div class="a" style="left:206px;top:355px;width:110px;height:39px;background:#ffffff;border-radius:7px;box-shadow:0 1px 3px 1px rgba(130,120,70,.45);"></div>
<div class="a" style="left:209px;top:357.5px;width:104px;height:33.5px;background:#6e6e6e;border-radius:5px;box-shadow:inset 0 -2px 2px rgba(0,0,0,.22);"></div>
<div class="t" style="left:-39.0px;width:600px;text-align:center;top:369.9px;font:normal normal 10.4px/1 'Liberation Sans',sans-serif;color:#fff;">7. LEN</div>
<div class="a" style="left:346px;top:355px;width:110px;height:39px;background:#ffffff;border-radius:7px;box-shadow:0 1px 3px 1px rgba(130,120,70,.45);"></div>
<div class="a" style="left:349px;top:357.5px;width:104px;height:33.5px;background:#6e6e6e;border-radius:5px;box-shadow:inset 0 -2px 2px rgba(0,0,0,.22);"></div>
<div class="t" style="left:101.0px;width:600px;text-align:center;top:369.9px;font:normal normal 10.4px/1 'Liberation Sans',sans-serif;color:#fff;">8. COUNTA</div>
<div class="a" style="left:487px;top:355px;width:110px;height:39px;background:#ffffff;border-radius:7px;box-shadow:0 1px 3px 1px rgba(130,120,70,.45);"></div>
<div class="a" style="left:490px;top:357.5px;width:104px;height:33.5px;background:#6e6e6e;border-radius:5px;box-shadow:inset 0 -2px 2px rgba(0,0,0,.22);"></div>
<div class="t" style="left:242.0px;width:600px;text-align:center;top:369.9px;font:normal normal 10.4px/1 'Liberation Sans',sans-serif;color:#fff;">9. ROUND</div>
<div class="a" style="left:627px;top:355px;width:110px;height:39px;background:#ffffff;border-radius:7px;box-shadow:0 1px 3px 1px rgba(130,120,70,.45);"></div>
<div class="a" style="left:630px;top:357.5px;width:104px;height:33.5px;background:#6e6e6e;border-radius:5px;box-shadow:inset 0 -2px 2px rgba(0,0,0,.22);"></div>
<div class="t" style="left:382.0px;width:600px;text-align:center;top:369.9px;font:normal normal 10.4px/1 'Liberation Sans',sans-serif;color:#fff;">10. SUMPRODUCT</div>
<svg style="left:783px;top:334px" width="62" height="62" viewBox="0 0 62 62"><circle cx="31" cy="31" r="30" fill="#bfbfbf" stroke="#fff" stroke-width="1"/><line x1="31" y1="1" x2="31" y2="31" stroke="#fff" stroke-width="2"/></svg>
<div class="t" style="left:638.7px;width:600px;text-align:center;top:336.7px;font:normal normal 12.3px/1 'Liberation Sans',sans-serif;color:#1a1a1a;transform:scaleX(0.947);transform-origin:center;">So far you have completed:</div>
<div class="t" style="left:638.7px;width:600px;text-align:center;top:367.4px;font:normal bold 12px/1 'Liberation Sans',sans-serif;color:#1a1a1a;transform:scaleX(1.067);transform-origin:center;">0%</div>
<div class="a" style="left:50px;top:412px;width:992px;height:108px;background:#7b6b4d;border:1px solid #3a3328"></div>
<div class="a" style="left:771px;top:412px;width:1px;height:108px;background:#3e3628;"></div>
<div class="t" style="left:606.4px;width:600px;text-align:center;top:423.2px;font:normal bold 11px/1 'Liberation Sans',sans-serif;color:#3b3427;transform:scaleX(1.011);transform-origin:center;">MEDIUM LEVEL</div>
<div class="a" style="left:66px;top:420px;width:110px;height:41px;background:#7a756b;border-radius:7px;"></div>
<div class="a" style="left:69px;top:422.5px;width:104px;height:35.5px;background:#565656;border-radius:5px;"></div>
<div class="t" style="left:-179.0px;width:600px;text-align:center;top:436.9px;font:normal normal 10.4px/1 'Liberation Sans',sans-serif;color:#7f7f7f;">11. VLOOKUP</div>
<div class="a" style="left:206px;top:420px;width:110px;height:41px;background:#7a756b;border-radius:7px;"></div>
<div class="a" style="left:209px;top:422.5px;width:104px;height:35.5px;background:#565656;border-radius:5px;"></div>
<div class="t" style="left:-39.0px;width:600px;text-align:center;top:436.9px;font:normal normal 10.4px/1 'Liberation Sans',sans-serif;color:#7f7f7f;">12. IF</div>
<div class="a" style="left:346px;top:420px;width:110px;height:41px;background:#7a756b;border-radius:7px;"></div>
<div class="a" style="left:349px;top:422.5px;width:104px;height:35.5px;background:#565656;border-radius:5px;"></div>
<div class="t" style="left:101.0px;width:600px;text-align:center;top:436.9px;font:normal normal 10.4px/1 'Liberation Sans',sans-serif;color:#7f7f7f;">13. COUNTIF</div>
<div class="a" style="left:487px;top:420px;width:110px;height:41px;background:#7a756b;border-radius:7px;"></div>
<div class="a" style="left:490px;top:422.5px;width:104px;height:35.5px;background:#565656;border-radius:5px;"></div>
<div class="t" style="left:242.0px;width:600px;text-align:center;top:436.9px;font:normal normal 10.4px/1 'Liberation Sans',sans-serif;color:#7f7f7f;">14. SUMIF</div>
<div class="a" style="left:627px;top:420px;width:110px;height:41px;background:#7a756b;border-radius:7px;"></div>
<div class="a" style="left:630px;top:422.5px;width:104px;height:35.5px;background:#565656;border-radius:5px;"></div>
<div class="t" style="left:382.0px;width:600px;text-align:center;top:436.9px;font:normal normal 10.4px/1 'Liberation Sans',sans-serif;color:#7f7f7f;">15. IS Functions</div>
<div class="a" style="left:66px;top:473px;width:110px;height:39px;background:#7a756b;border-radius:7px;"></div>
<div class="a" style="left:69px;top:475.5px;width:104px;height:33.5px;background:#565656;border-radius:5px;"></div>
<div class="t" style="left:-179.0px;width:600px;text-align:center;top:487.2px;font:normal normal 10.4px/1 'Liberation Sans',sans-serif;color:#7f7f7f;">16. CONCATENATE</div>
<div class="a" style="left:206px;top:473px;width:110px;height:39px;background:#7a756b;border-radius:7px;"></div>
<div class="a" style="left:209px;top:475.5px;width:104px;height:33.5px;background:#565656;border-radius:5px;"></div>
<div class="t" style="left:-39.0px;width:600px;text-align:center;top:487.2px;font:normal normal 10.4px/1 'Liberation Sans',sans-serif;color:#7f7f7f;">17. HLOOKUP</div>
<div class="a" style="left:346px;top:473px;width:110px;height:39px;background:#7a756b;border-radius:7px;"></div>
<div class="a" style="left:349px;top:475.5px;width:104px;height:33.5px;background:#565656;border-radius:5px;"></div>
<div class="t" style="left:101.0px;width:600px;text-align:center;top:487.2px;font:normal normal 10.4px/1 'Liberation Sans',sans-serif;color:#7f7f7f;">18. RIGHT - LEFT</div>
<div class="a" style="left:487px;top:473px;width:110px;height:39px;background:#7a756b;border-radius:7px;"></div>
<div class="a" style="left:490px;top:475.5px;width:104px;height:33.5px;background:#565656;border-radius:5px;"></div>
<div class="t" style="left:242.0px;width:600px;text-align:center;top:487.2px;font:normal normal 10.4px/1 'Liberation Sans',sans-serif;color:#7f7f7f;">19. RAND</div>
<div class="a" style="left:627px;top:473px;width:110px;height:39px;background:#7a756b;border-radius:7px;"></div>
<div class="a" style="left:630px;top:475.5px;width:104px;height:33.5px;background:#565656;border-radius:5px;"></div>
<div class="t" style="left:382.0px;width:600px;text-align:center;top:487.2px;font:normal normal 10.4px/1 'Liberation Sans',sans-serif;color:#7f7f7f;">20. IFERROR</div>
<svg style="left:783px;top:451px" width="62" height="62" viewBox="0 0 62 62"><circle cx="31" cy="31" r="30" fill="#747474" stroke="#8c8473" stroke-width="1.2"/><line x1="31" y1="1" x2="31" y2="31" stroke="#8f8f8f" stroke-width="2"/></svg>
<div class="t" style="left:638.7px;width:600px;text-align:center;top:453.8px;font:normal normal 12.3px/1 'Liberation Sans',sans-serif;color:#3b3427;transform:scaleX(0.947);transform-origin:center;">So far you have completed:</div>
<div class="t" style="left:638.7px;width:600px;text-align:center;top:484.4px;font:normal bold 12px/1 'Liberation Sans',sans-serif;color:#3b3427;transform:scaleX(1.067);transform-origin:center;">0%</div>
<div class="a" style="left:50px;top:520px;width:992px;height:6px;background:#777777;"></div>
<div class="a" style="left:50px;top:526px;width:992px;height:1px;background:#f4f4f4;"></div>
<div class="a" style="left:50px;top:527px;width:992px;height:110px;background:#564b3e;border:1px solid #2e2a24"></div>
<div class="a" style="left:771px;top:527px;width:1px;height:110px;background:#4a4136;"></div>
<div class="t" style="left:606.4px;width:600px;text-align:center;top:541.5px;font:normal bold 11px/1 'Liberation Sans',sans-serif;color:#463c31;transform:scaleX(0.930);transform-origin:center;">ADVANCED LEVEL</div>
<div class="a" style="left:66px;top:539px;width:110px;height:40px;background:#5e564c;border-radius:7px;"></div>
<div class="a" style="left:69px;top:541.5px;width:104px;height:34.5px;background:#474747;border-radius:5px;"></div>
<div class="t" style="left:-179.0px;width:600px;text-align:center;top:546.9px;font:normal normal 10.4px/1 'Liberation Sans',sans-serif;color:#505050;">21. VLOOKUP</div>
<div class="t" style="left:-179.0px;width:600px;text-align:center;top:560.9px;font:normal normal 10.4px/1 'Liberation Sans',sans-serif;color:#505050;">Advanced</div>
<div class="a" style="left:206px;top:539px;width:110px;height:40px;background:#5e564c;border-radius:7px;"></div>
<div class="a" style="left:209px;top:541.5px;width:104px;height:34.5px;background:#474747;border-radius:5px;"></div>
<div class="t" style="left:-39.0px;width:600px;text-align:center;top:546.9px;font:normal normal 10.4px/1 'Liberation Sans',sans-serif;color:#505050;">22. IF - AND</div>
<div class="t" style="left:-39.0px;width:600px;text-align:center;top:560.9px;font:normal normal 10.4px/1 'Liberation Sans',sans-serif;color:#505050;">Combinations</div>
<div class="a" style="left:346px;top:539px;width:110px;height:40px;background:#5e564c;border-radius:7px;"></div>
<div class="a" style="left:349px;top:541.5px;width:104px;height:34.5px;background:#474747;border-radius:5px;"></div>
<div class="t" style="left:101.0px;width:600px;text-align:center;top:546.9px;font:normal normal 10.4px/1 'Liberation Sans',sans-serif;color:#505050;">23. IF - OR</div>
<div class="t" style="left:101.0px;width:600px;text-align:center;top:560.9px;font:normal normal 10.4px/1 'Liberation Sans',sans-serif;color:#505050;">Combinations</div>
<div class="a" style="left:487px;top:539px;width:110px;height:40px;background:#5e564c;border-radius:7px;"></div>
<div class="a" style="left:490px;top:541.5px;width:104px;height:34.5px;background:#474747;border-radius:5px;"></div>
<div class="t" style="left:242.0px;width:600px;text-align:center;top:553.9px;font:normal normal 10.4px/1 'Liberation Sans',sans-serif;color:#505050;"></div>
<div class="a" style="left:627px;top:539px;width:110px;height:40px;background:#5e564c;border-radius:7px;"></div>
<div class="a" style="left:630px;top:541.5px;width:104px;height:34.5px;background:#474747;border-radius:5px;"></div>
<div class="t" style="left:382.0px;width:600px;text-align:center;top:553.9px;font:normal normal 10.4px/1 'Liberation Sans',sans-serif;color:#505050;">25. MATCH</div>
<div class="a" style="left:66px;top:591px;width:110px;height:37px;background:#5e564c;border-radius:7px;"></div>
<div class="a" style="left:69px;top:593.5px;width:104px;height:31.5px;background:#474747;border-radius:5px;"></div>
<div class="t" style="left:-179.0px;width:600px;text-align:center;top:604.9px;font:normal normal 10.4px/1 'Liberation Sans',sans-serif;color:#505050;">26. INDEX</div>
<div class="a" style="left:206px;top:591px;width:110px;height:37px;background:#5e564c;border-radius:7px;"></div>
<div class="a" style="left:209px;top:593.5px;width:104px;height:31.5px;background:#474747;border-radius:5px;"></div>
<div class="t" style="left:-39.0px;width:600px;text-align:center;top:604.9px;font:normal normal 10.4px/1 'Liberation Sans',sans-serif;color:#505050;">27. MID</div>
<div class="a" style="left:346px;top:591px;width:110px;height:37px;background:#5e564c;border-radius:7px;"></div>
<div class="a" style="left:349px;top:593.5px;width:104px;height:31.5px;background:#474747;border-radius:5px;"></div>
<div class="t" style="left:101.0px;width:600px;text-align:center;top:604.9px;font:normal normal 10.4px/1 'Liberation Sans',sans-serif;color:#505050;">28. OFFSET</div>
<div class="a" style="left:487px;top:591px;width:110px;height:37px;background:#5e564c;border-radius:7px;"></div>
<div class="a" style="left:490px;top:593.5px;width:104px;height:31.5px;background:#474747;border-radius:5px;"></div>
<div class="t" style="left:242.0px;width:600px;text-align:center;top:604.9px;font:normal normal 10.4px/1 'Liberation Sans',sans-serif;color:#505050;">29. INDIRECT</div>
<div class="a" style="left:627px;top:591px;width:110px;height:37px;background:#5e564c;border-radius:7px;"></div>
<div class="a" style="left:630px;top:593.5px;width:104px;height:31.5px;background:#474747;border-radius:5px;"></div>
<div class="t" style="left:382.0px;width:600px;text-align:center;top:604.9px;font:normal normal 10.4px/1 'Liberation Sans',sans-serif;color:#505050;">30. Array Formulas</div>
<svg style="left:783px;top:567px" width="62" height="62" viewBox="0 0 62 62"><circle cx="31" cy="31" r="30" fill="#575757" stroke="#62584a" stroke-width="1.2"/><line x1="31" y1="1" x2="31" y2="31" stroke="#606060" stroke-width="2"/></svg>
<div class="t" style="left:638.7px;width:600px;text-align:center;top:571.0px;font:normal normal 12.3px/1 'Liberation Sans',sans-serif;color:#4a4034;transform:scaleX(0.947);transform-origin:center;">So far you have completed:</div>
<div class="t" style="left:638.7px;width:600px;text-align:center;top:601.1px;font:normal bold 12px/1 'Liberation Sans',sans-serif;color:#4a4034;transform:scaleX(1.067);transform-origin:center;">0%</div>
<svg style="left:128px;top:429px;filter:drop-shadow(0 0 1.2px rgba(0,0,0,.9)) drop-shadow(1px 1.5px 1.5px rgba(0,0,0,.5))" width="68" height="82" viewBox="0 0 68 82"><g><path d="M16 38V14A9.5 9.5 0 0 1 25.5 4.5H41A9.5 9.5 0 0 1 50.5 14V38" fill="none" stroke="#d2d4d6" stroke-width="8"/><rect x="4" y="35" width="58.6" height="41.2" rx="2.5" fill="#f4c31c"/><path d="M33.2 35H60.1A2.5 2.5 0 0 1 62.6 37.5V73.7A2.5 2.5 0 0 1 60.1 76.2H33.2Z" fill="#f59f1a"/></g><circle cx="33.2" cy="53.6" r="5" fill="#151515"/><rect x="31.2" y="54" width="4" height="12.8" rx="1.2" fill="#151515"/></svg>
<svg style="left:128px;top:547px;filter:drop-shadow(0 0 1.2px rgba(0,0,0,.9)) drop-shadow(1px 1.5px 1.5px rgba(0,0,0,.5))" width="68" height="82" viewBox="0 0 68 82"><g><path d="M16 38V14A9.5 9.5 0 0 1 25.5 4.5H41A9.5 9.5 0 0 1 50.5 14V38" fill="none" stroke="#d2d4d6" stroke-width="8"/><rect x="4" y="35" width="58.6" height="41.2" rx="2.5" fill="#f4c31c"/><path d="M33.2 35H60.1A2.5 2.5 0 0 1 62.6 37.5V73.7A2.5 2.5 0 0 1 60.1 76.2H33.2Z" fill="#f59f1a"/></g><circle cx="33.2" cy="53.6" r="5" fill="#151515"/><rect x="31.2" y="54" width="4" height="12.8" rx="1.2" fill="#151515"/></svg>
<div class="t" style="left:245.5px;width:600px;text-align:center;top:449.9px;font:normal bold 16.3px/1 'Liberation Sans',sans-serif;color:#fff;transform:scaleX(0.952);transform-origin:center;text-shadow:0 0 3px rgba(0,0,0,.55),1px 1px 1px rgba(0,0,0,.5)">TO UNLOCK:</div>
<div class="t" style="left:246px;width:600px;text-align:center;top:473.4px;font:normal bold 16.3px/1 'Liberation Sans',sans-serif;color:#fff;transform:scaleX(0.961);transform-origin:center;text-shadow:0 0 3px rgba(0,0,0,.55),1px 1px 1px rgba(0,0,0,.5)">COMPLETE THE BEGINNER LEVEL WITH A MIN. SUCCESS OF 75%</div>
<div class="t" style="left:245.5px;width:600px;text-align:center;top:562.4px;font:normal bold 16.3px/1 'Liberation Sans',sans-serif;color:#fff;transform:scaleX(0.952);transform-origin:center;text-shadow:0 0 3px rgba(0,0,0,.55),1px 1px 1px rgba(0,0,0,.5)">TO UNLOCK:</div>
<div class="t" style="left:246.39999999999998px;width:600px;text-align:center;top:586.4px;font:normal bold 16.3px/1 'Liberation Sans',sans-serif;color:#fff;transform:scaleX(0.985);transform-origin:center;text-shadow:0 0 3px rgba(0,0,0,.55),1px 1px 1px rgba(0,0,0,.5)">COMPLETE THE MEDIUM LEVEL WITH A MIN. SUCCESS OF 75%</div>
<div class="a" style="left:1259px;top:198px;width:21px;height:445px;background:#e8e8e8;"></div>
<div class="a" style="left:1259px;top:198px;width:2px;height:445px;background:#b4b4b4;"></div>
<div class="a" style="left:1264px;top:200px;width:14px;height:14px;background:#fff;border:1px solid #bdbdbd"></div>
<svg style="left:1267px;top:204px" width="8" height="5"><path d="M0 4.5L4 0.5L8 4.5Z" fill="#555"/></svg>
<div class="a" style="left:1264px;top:214px;width:14px;height:412px;background:#dadada;"></div>
<div class="a" style="left:1264px;top:213px;width:14px;height:275px;background:#fff;border:1px solid #a8a8a8"></div>
<div class="a" style="left:1264px;top:626px;width:14px;height:14px;background:#fff;border:1px solid #bdbdbd"></div>
<svg style="left:1267px;top:631px" width="8" height="5"><path d="M0 0.5L4 4.5L8 0.5Z" fill="#555"/></svg>
<div class="a" style="left:0px;top:642px;width:1280px;height:26px;background:#e8e8e8;"></div>
<div class="a" style="left:0px;top:642px;width:1260px;height:1px;background:#a0a0a0;"></div>
<div class="a" style="left:2px;top:648px;width:1257px;height:15px;background:#dadada;"></div>
<div class="a" style="left:2px;top:648px;width:15px;height:15px;background:#fff;border:1px solid #bdbdbd"></div>
<svg style="left:7px;top:652px" width="5" height="8"><path d="M4.5 0L0.5 4L4.5 8Z" fill="#555"/></svg>
<div class="a" style="left:16px;top:648px;width:1213px;height:15px;background:#fff;border:1px solid #a8a8a8"></div>
<div class="a" style="left:1244px;top:648px;width:15px;height:15px;background:#fff;border:1px solid #bdbdbd"></div>
<svg style="left:1249px;top:652px" width="5" height="8"><path d="M0.5 0L4.5 4L0.5 8Z" fill="#555"/></svg>
<div class="a" style="left:0px;top:668px;width:1280px;height:1px;background:#d4d4d4;"></div>
<div class="a" style="left:0px;top:669px;width:1280px;height:19px;background:#f3f3f3;"></div>
<div class="t" style="left:7px;top:673.5px;font:normal normal 10.5px/1 'Liberation Sans',sans-serif;color:#505050;transform:scaleX(0.922);transform-origin:left;">Ready</div>
<svg style="left:55px;top:672px" width="13" height="13" viewBox="0 0 13 13"><circle cx="2.5" cy="2.5" r="2" fill="#777"/><path d="M6 1H12M6 3H12" stroke="#777"/><path d="M0.5 6.5H12.5V12.5H0.5ZM4 6.5V12.5M7 6.5V12.5M10 6.5V12.5" fill="none" stroke="#888"/></svg>
<div class="a" style="left:1013px;top:669px;width:34px;height:18px;background:#d6d6d6;"></div>
<svg style="left:1023px;top:671px" width="13" height="13" viewBox="0 0 13 13"><path d="M0.5 0.5H12.5V12.5H0.5ZM4.5 0.5V12.5M8.5 0.5V12.5M0.5 4.5H12.5M0.5 8.5H12.5" fill="none" stroke="#666"/></svg>
<svg style="left:1059px;top:671px" width="14" height="13" viewBox="0 0 14 13"><path d="M0.5 0.5H13.5V12.5H0.5Z" fill="none" stroke="#777"/><path d="M3.5 2.5H10.5V10.5H3.5ZM5 5H9M5 7H9" fill="none" stroke="#888"/></svg>
<svg style="left:1095px;top:671px" width="14" height="13" viewBox="0 0 14 13"><path d="M0.5 0.5H13.5V12.5H0.5ZM0.5 8.5H13.5M5.5 0.5V5.5M8.5 0.5V5.5" fill="none" stroke="#777"/></svg>
<div class="a" style="left:1124px;top:677px;width:6px;height:2px;background:#555;"></div>
<div class="a" style="left:1134px;top:677px;width:101px;height:1px;background:#b8b8b8;"></div>
<div class="a" style="left:1172px;top:673px;width:4px;height:10px;background:#555;"></div>
<svg style="left:1230px;top:673px" width="10" height="10"><path d="M5 0V10M0 5H10" stroke="#444" stroke-width="1.6"/></svg>
<div class="t" style="left:1252px;top:673.4px;font:normal normal 11.5px/1 'Liberation Sans',sans-serif;color:#555;transform:scaleX(0.868);transform-origin:left;">%85</div>
<div class="a" style="left:0px;top:688px;width:1280px;height:32px;background:#000;"></div>
</body></html>
